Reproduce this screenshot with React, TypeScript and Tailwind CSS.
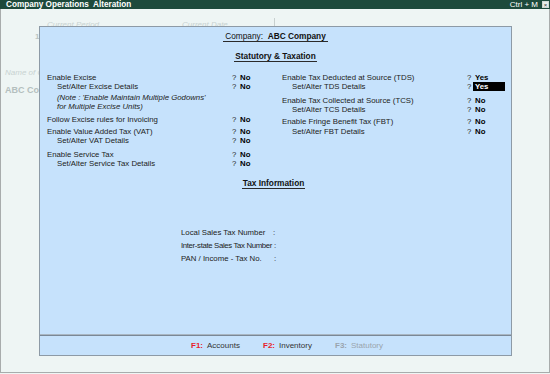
const font = { fontFamily: '"Liberation Sans", Arial, sans-serif' }

type Row = { label: string; value?: string; indent?: boolean; italic?: boolean; mt?: string; active?: boolean }

const leftRows: Row[] = [
  { label: 'Enable Excise', value: 'No' },
  { label: 'Set/Alter Excise Details', value: 'No', indent: true },
  { label: "(Note : 'Enable Maintain Multiple Godowns'", indent: true, italic: true, mt: 'mt-[2px]' },
  { label: 'for Multiple Excise Units)', indent: true, italic: true },
  { label: 'Follow Excise rules for Invoicing', value: 'No', mt: 'mt-[4px]' },
  { label: 'Enable Value Added Tax (VAT)', value: 'No', mt: 'mt-[3px]' },
  { label: 'Set/Alter VAT Details', value: 'No', indent: true },
  { label: 'Enable Service Tax', value: 'No', mt: 'mt-[5px]' },
  { label: 'Set/Alter Service Tax Details', value: 'No', indent: true },
]

const rightRows: Row[] = [
  { label: 'Enable Tax Deducted at Source (TDS)', value: 'Yes' },
  { label: 'Set/Alter TDS Details', value: 'Yes', indent: true, active: true },
  { label: 'Enable Tax Collected at Source (TCS)', value: 'No', mt: 'mt-[5px]' },
  { label: 'Set/Alter TCS Details', value: 'No', indent: true },
  { label: 'Enable Fringe Benefit Tax (FBT)', value: 'No', mt: 'mt-[3px]' },
  { label: 'Set/Alter FBT Details', value: 'No', indent: true, mt: 'mt-[1px]' },
]

function FieldRow({ row }: { row: Row }) {
  return (
    <div className={`flex h-[9px] leading-[9px] ${row.mt ?? ''}`}>
      <div
        className={`w-[185px] shrink-0 whitespace-nowrap text-[#222] ${row.indent ? 'pl-[10px]' : ''} ${
          row.italic ? 'italic' : ''
        }`}
      >
        {row.label}
      </div>
      {row.value && (
        <>
          <div className="w-[6px] shrink-0 text-[#222]">?</div>
          {row.active ? (
            <div className="w-[32px] shrink-0 bg-black pl-[2px] font-bold text-white">{row.value}</div>
          ) : (
            <div className="pl-[2px] font-bold text-black">{row.value}</div>
          )}
        </>
      )}
    </div>
  )
}

export default function App() {
  return (
    <div className="w-[550px] h-[374px] flex flex-col bg-[#eef5f4] text-[7.8px]" style={font}>
      {/* title bar */}
      <div className="h-[9px] flex items-center bg-[#1d4a3c] text-white">
        <div className="pl-[6px] font-bold text-[8.2px] leading-[9px] whitespace-pre">Company Operations  Alteration</div>
        <div className="ml-auto pr-[4px] text-[8px] leading-[9px]">Ctrl + M</div>
        <div className="mr-[1px] w-[7px] h-[7px] border border-[#cfd8d4] bg-[#e6ece9] flex items-center justify-center text-[6px] leading-none text-[#333]">
          ×
        </div>
      </div>

      {/* background form */}
      <div className="relative flex-1 mb-[1px] border-l border-r border-b border-[#a8acac]">
        <div className="flex pt-[10px] text-[#c8d2d1] italic text-[8px]">
          <div className="ml-[46px] w-[135px]">Current Period</div>
          <div className="w-[92px]">Current Date</div>
          <div className="w-px h-[10px] mt-[-1px] bg-[#c8d0cf]" />
        </div>
        <div className="pl-[34px] font-bold text-[#b9c4c3] text-[8px]">1</div>
        <div className="pl-[4px] mt-[24px] italic text-[#c8d2d1] text-[8px]">Name of C</div>
        <div className="pl-[4px] mt-[5px] font-bold text-[#b4bfbe] text-[9px]">ABC Com</div>

        {/* dialog */}
        <div className="absolute left-[38px] top-[17px] w-[473px] h-[330px] flex flex-col border border-[#8d9aa6] bg-[#c6e2fc]">
          <div className="flex-1 flex flex-col">
            <div className="mt-[5px] flex justify-center">
              <div className="px-[2px] border-b-[1.5px] border-[#2a2a2a] leading-[9px] whitespace-pre text-[8.3px] text-[#111]">
                Company:  <span className="font-bold">ABC Company</span>
              </div>
            </div>
            <div className="mt-[10px] flex justify-center">
              <div className="px-[1px] border-b-[1.5px] border-[#2a2a2a] leading-[9px] font-bold text-[8.3px] text-[#111]">
                Statutory &amp; Taxation
              </div>
            </div>

            <div className="mt-[11px] flex pl-[7px]">
              <div className="w-[235px] shrink-0">
                {leftRows.map((r, i) => (
                  <FieldRow key={i} row={r} />
                ))}
              </div>
              <div className="flex-1 min-w-0">
                {rightRows.map((r, i) => (
                  <FieldRow key={i} row={r} />
                ))}
              </div>
            </div>

            <div className="mt-[11px] flex justify-center">
              <div className="ml-[-4px] px-[1px] border-b-[1.5px] border-[#2a2a2a] leading-[9px] font-bold text-[8.3px] text-[#111]">
                Tax Information
              </div>
            </div>

            <div className="mt-[39px] pl-[141px] flex flex-col gap-[4px] text-[#222]">
              <div className="flex h-[9px] leading-[9px]">
                <div className="w-[92px] whitespace-nowrap">Local Sales Tax Number</div>
                <div>:</div>
              </div>
              <div className="flex h-[9px] leading-[9px]">
                <div className="w-[93px] whitespace-nowrap tracking-[-0.35px]">Inter-state Sales Tax Number</div>
                <div>:</div>
              </div>
              <div className="flex h-[9px] leading-[9px]">
                <div className="w-[93px] whitespace-nowrap">PAN / Income - Tax No.</div>
                <div>:</div>
              </div>
            </div>
          </div>

          {/* footer */}
          <div className="h-[20px] flex items-center border-t border-[#7a8896] shadow-[0_-1px_0_#a9b6c2] text-[8px]">
            <div className="ml-[151px] flex w-[72px]">
              <span className="font-bold text-[#e8202a]">F1:</span>
              <span className="ml-[4px] text-[#333]">Accounts</span>
            </div>
            <div className="flex w-[72px]">
              <span className="font-bold text-[#e8202a]">F2:</span>
              <span className="ml-[4px] text-[#333]">Inventory</span>
            </div>
            <div className="flex">
              <span className="font-bold text-[#9aa4ad]">F3:</span>
              <span className="ml-[4px] text-[#9aa4ad]">Statutory</span>
            </div>
          </div>
        </div>
      </div>
    </div>
  )
}
